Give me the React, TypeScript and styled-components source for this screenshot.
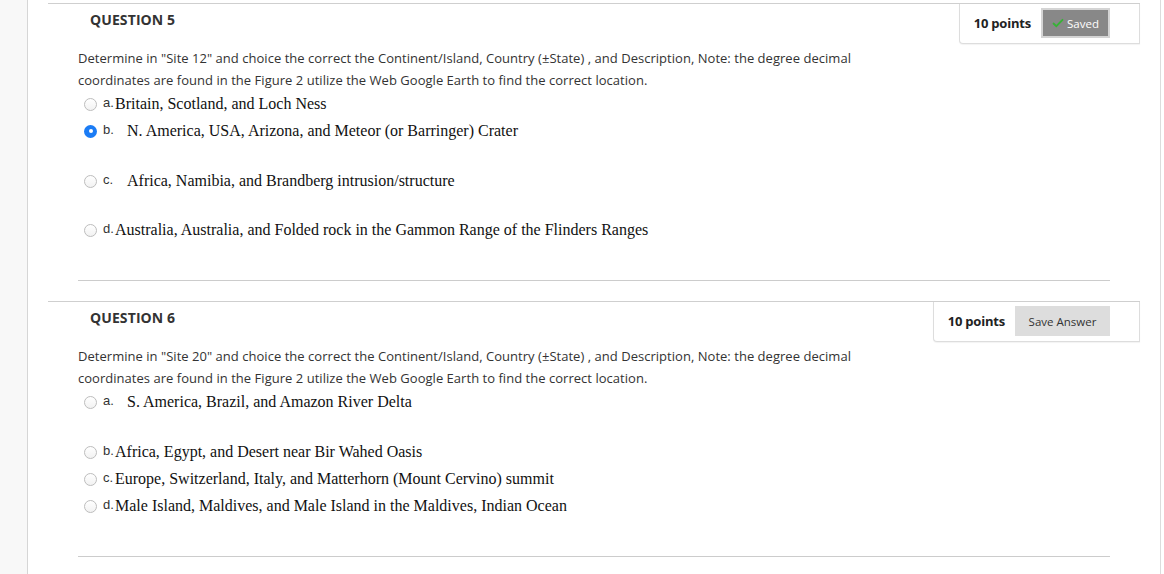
import React from "react";
import styled, { createGlobalStyle } from "styled-components";

const GlobalStyle = createGlobalStyle`
	html, body {
		margin: 0;
		padding: 0;
		background: #ffffff;
	}
	body {
		font-family: "Open Sans", "Liberation Sans", sans-serif;
		color: #333333;
	}
`;

interface Option {
	letter: string;
	text: string;
	wide?: boolean;
	extra?: number;
	checked?: boolean;
}

interface Question {
	num: number;
	site: number;
	saved: boolean;
	options: Option[];
}

const questions: Question[] = [
	{
		num: 5,
		site: 12,
		saved: true,
		options: [
			{ letter: "a.", text: "Britain, Scotland, and Loch Ness" },
			{
				letter: "b.",
				text: "N. America, USA, Arizona, and Meteor (or Barringer) Crater",
				wide: true,
				extra: 23,
				checked: true
			},
			{ letter: "c.", text: "Africa, Namibia, and Brandberg intrusion/structure", wide: true, extra: 22 },
			{
				letter: "d.",
				text: "Australia, Australia, and Folded rock in the Gammon Range of the Flinders Ranges"
			}
		]
	},
	{
		num: 6,
		site: 20,
		saved: false,
		options: [
			{ letter: "a.", text: "S. America, Brazil, and Amazon River Delta", wide: true, extra: 23 },
			{ letter: "b.", text: "Africa, Egypt, and Desert near Bir Wahed Oasis" },
			{ letter: "c.", text: "Europe, Switzerland, Italy, and Matterhorn (Mount Cervino) summit" },
			{ letter: "d.", text: "Male Island, Maldives, and Male Island in the Maldives, Indian Ocean" }
		]
	}
];

const Layout = styled.div`
	display: flex;
	min-height: 574px;
`;

const Sidebar = styled.div`
	width: 27px;
	flex: none;
	background: #f8f8f8;
	border-right: 1px solid #d6d6d6;
`;

const Main = styled.div`
	width: 1092px;
	flex: none;
	padding: 3px 20px 0 20px;
	border-right: 1px solid #dcdcdc;
`;

const QuestionBlock = styled.div`
	border-top: 1px solid #cfcfcf;
	margin-bottom: 20px;
`;

const Header = styled.div`
	display: flex;
	align-items: flex-start;
	justify-content: space-between;
`;

const Title = styled.h3`
	margin: 6px 0 0 42px;
	font-size: 14px;
	line-height: 20px;
	font-weight: 700;
	color: #333333;
	letter-spacing: 0.1px;
`;

const PointsBox = styled.div`
	display: flex;
	align-items: center;
	gap: 10px;
	padding: 4px 29px 5px 14px;
	border: 1px solid #dddddd;
	border-top: none;
	border-bottom-left-radius: 4px;
	background: #ffffff;
	box-shadow: 0 1px 1px rgba(0, 0, 0, 0.05);
`;

const Points = styled.span`
	font-size: 13px;
	line-height: 18px;
	font-weight: 700;
	color: #222222;
	letter-spacing: -0.2px;
`;

const SaveButton = styled.div<{ $saved: boolean }>`
	display: flex;
	align-items: center;
	justify-content: center;
	gap: 3px;
	box-sizing: border-box;
	height: 30px;
	width: ${(p) => (p.$saved ? "69px" : "95px")};
	font-size: 11.5px;
	color: ${(p) => (p.$saved ? "#ffffff" : "#333333")};
	background: ${(p) => (p.$saved ? "#888888" : "#dddddd")};
	border: ${(p) => (p.$saved ? "2px solid #d4d4d4" : "none")};
`;

const Body = styled.div`
	padding: 3px 30px 0 30px;
`;

const Prompt = styled.p`
	margin: 0;
	font-size: 13px;
	line-height: 22px;
	color: #333333;
	letter-spacing: 0.03px;
`;

const OptionList = styled.div`
	margin-top: -1px;
	padding-left: 6px;
`;

const OptionRow = styled.label<{ $extra: number }>`
	display: flex;
	align-items: center;
	height: 27px;
	margin-bottom: ${(p) => p.$extra}px;
`;

const Radio = styled.span<{ $checked: boolean }>`
	position: relative;
	box-sizing: border-box;
	width: 13px;
	height: 13px;
	border-radius: 50%;
	flex: none;
	border: ${(p) => (p.$checked ? "none" : "1px solid #bdbdbd")};
	background: ${(p) => (p.$checked ? "#1b7cf5" : "linear-gradient(#ffffff, #f2f2f2)")};
	margin-top: 1px;

	&::after {
		content: "";
		display: ${(p) => (p.$checked ? "block" : "none")};
		position: absolute;
		left: 4.5px;
		top: 4.5px;
		width: 4px;
		height: 4px;
		border-radius: 50%;
		background: #ffffff;
	}
`;

const Letter = styled.span<{ $wide: boolean }>`
	font-family: "Liberation Sans", Arial, sans-serif;
	font-size: 13px;
	color: #333333;
	margin-left: 6px;
	width: ${(p) => (p.$wide ? "24px" : "12px")};
	flex: none;
	position: relative;
	top: -1px;
`;

const AnswerText = styled.span`
	font-family: "Liberation Serif", "Times New Roman", serif;
	font-size: 16px;
	color: #111111;
`;

const Divider = styled.div`
	margin: 37px 30px 0 30px;
	border-top: 1px solid #cccccc;
`;

const CheckIcon = () => (
	<svg width="12" height="10" viewBox="0 0 12 10">
		<path d="M1.5 5.5 L4.3 8.2 L10.5 1.8" fill="none" stroke="#36b336" strokeWidth="1.8" strokeLinecap="round" />
	</svg>
);

const App = () => {
	return (
		<>
			<GlobalStyle />
			<Layout>
				<Sidebar />
				<Main>
					{questions.map((q) => (
						<QuestionBlock key={q.num}>
							<Header>
								<Title>QUESTION {q.num}</Title>
								<PointsBox>
									<Points>10 points</Points>
									<SaveButton $saved={q.saved}>
										{q.saved ? <CheckIcon /> : null}
										{q.saved ? "Saved" : "Save Answer"}
									</SaveButton>
								</PointsBox>
							</Header>
							<Body>
								<Prompt>
									Determine in "Site {q.site}" and choice the correct the Continent/Island, Country (±State) ,
									and Description, Note: the degree decimal
									<br />
									coordinates are found in the Figure 2 utilize the Web Google Earth to find the correct location.
								</Prompt>
								<OptionList>
									{q.options.map((o) => (
										<OptionRow key={o.letter} $extra={o.extra || 0}>
											<Radio $checked={!!o.checked} />
											<Letter $wide={!!o.wide}>{o.letter}</Letter>
											<AnswerText>{o.text}</AnswerText>
										</OptionRow>
									))}
								</OptionList>
							</Body>
							<Divider />
						</QuestionBlock>
					))}
				</Main>
			</Layout>
		</>
	);
};

export default App;
